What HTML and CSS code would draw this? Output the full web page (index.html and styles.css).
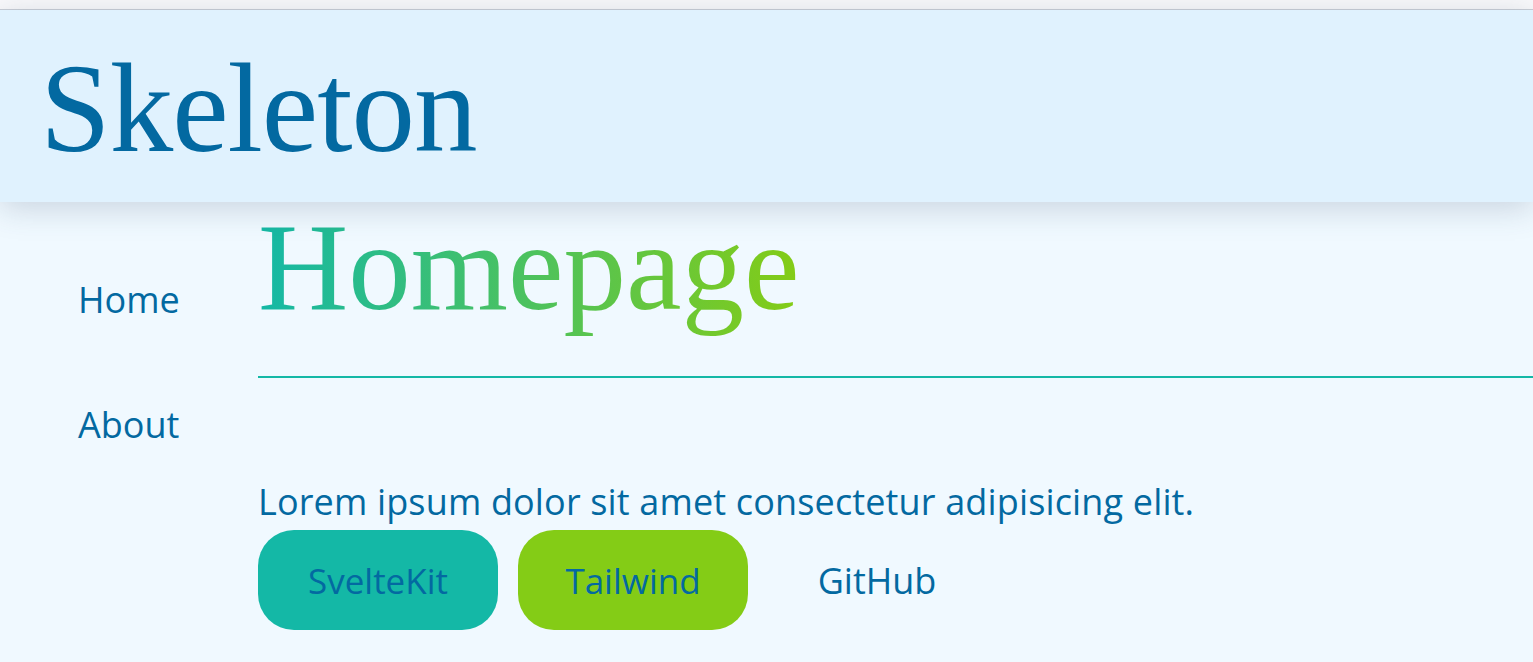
FILE: index.html
```html
<!DOCTYPE html>
<html lang="en">
<head>
<meta charset="utf-8">
<title>Skeleton</title>
<link rel="stylesheet" href="styles.css">
</head>
<body>
<div class="chrome"></div>
<header class="app-bar">
  <div class="brand">Skeleton</div>
</header>
<div class="shell">
  <nav class="sidebar">
    <a class="nav-link" href="#">Home</a>
    <a class="nav-link" href="#">About</a>
  </nav>
  <main class="content">
    <h1 class="title">Homepage</h1>
    <hr class="divider">
    <p class="lead">Lorem ipsum dolor sit amet consectetur adipisicing elit.</p>
    <div class="actions">
      <a class="btn btn-teal" href="#">SvelteKit</a>
      <a class="btn btn-lime" href="#">Tailwind</a>
      <a class="btn btn-ghost" href="#">GitHub</a>
    </div>
  </main>
</div>
</body>
</html>
```
FILE: styles.css
```css
html, body {
  margin: 0;
  padding: 0;
}
body {
  background: #f0f9ff;
  color: #0369a1;
  font-family: "Open Sans", "Noto Sans", sans-serif;
  height: 662px;
  overflow: hidden;
}
.chrome {
  height: 9px;
  background: #f9f9fb;
  border-bottom: 1px solid #c9ced6;
}
.app-bar {
  height: 192px;
  background: #e0f2fe;
  box-shadow: 0 6px 30px rgba(60, 80, 110, 0.22);
  position: relative;
  z-index: 2;
  display: flex;
  align-items: center;
  padding-left: 40px;
}
.brand {
  font-family: "Liberation Serif", "DejaVu Serif", serif;
  font-size: 127px;
  line-height: 1;
  color: #0369a1;
  margin-top: 4px;
  letter-spacing: -1px;
}
.shell {
  display: flex;
}
.sidebar {
  width: 258px;
  display: flex;
  flex-direction: column;
  padding-top: 77px;
  gap: 84px;
  padding-left: 78px;
  box-sizing: border-box;
}
.nav-link {
  color: #0369a1;
  text-decoration: none;
  font-size: 36px;
  line-height: 41px;
}
.content {
  flex: 1;
}
.title {
  margin: -9px 0 0 0;
  font-family: "Liberation Serif", "DejaVu Serif", serif;
  font-weight: 400;
  font-size: 125px;
  line-height: 148px;
  background: linear-gradient(90deg, #14b8a6 0%, #84cc16 540px);
  -webkit-background-clip: text;
  background-clip: text;
  color: transparent;
  width: 560px;
}
.divider {
  border: 0;
  height: 2px;
  background: #14b8a6;
  margin: 35px 0 0 0;
}
.lead {
  margin: 100px 0 0 0;
  font-size: 36px;
  line-height: 48px;
  letter-spacing: 0.15px;
}
.actions {
  display: flex;
  gap: 20px;
  margin-top: 4px;
}
.btn {
  height: 100px;
  display: flex;
  align-items: center;
  justify-content: center;
  border-radius: 36px;
  font-size: 35px;
  color: #0369a1;
  text-decoration: none;
}
.btn-teal {
  background: #14b8a6;
  width: 240px;
}
.btn-lime {
  background: #84cc16;
  width: 230px;
}
.btn-ghost {
  width: 218px;
  font-size: 36px;
}
```
